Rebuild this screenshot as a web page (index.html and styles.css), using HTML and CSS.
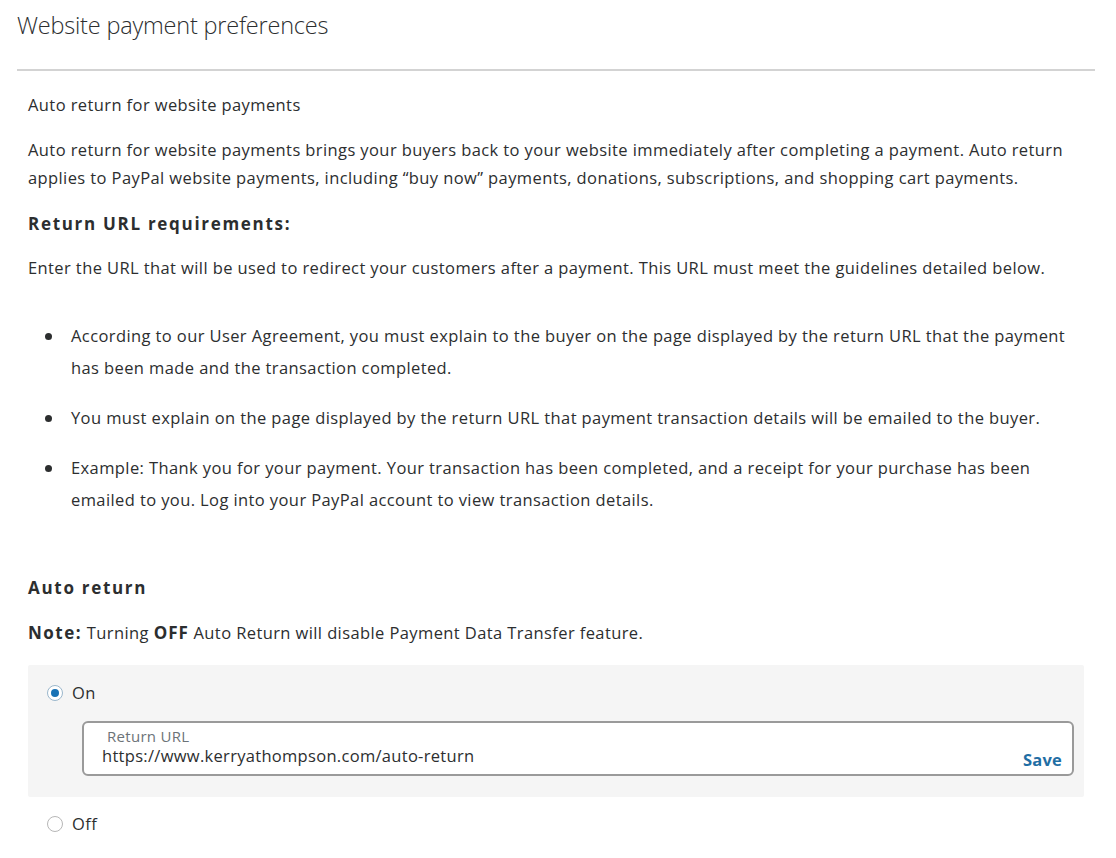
FILE: index.html
```html
<!DOCTYPE html>
<html>
<head>
<meta charset="utf-8">
<link rel="stylesheet" href="styles.css">
</head>
<body>
<div class="page">
  <h1 class="title">Website payment preferences</h1>
  <div class="rule"></div>
  <div class="content">
    <h2 class="subtitle">Auto return for website payments</h2>
    <p class="intro">Auto return for website payments brings your buyers back to your website immediately after completing a payment. Auto return applies to PayPal website payments, including “buy now” payments, donations, subscriptions, and shopping cart payments.</p>
    <h3 class="heading">Return URL requirements:</h3>
    <p class="lead">Enter the URL that will be used to redirect your customers after a payment. This URL must meet the guidelines detailed below.</p>
    <ul class="reqs">
      <li>According to our User Agreement, you must explain to the buyer on the page displayed by the return URL that the payment has been made and the transaction completed.</li>
      <li>You must explain on the page displayed by the return URL that payment transaction details will be emailed to the buyer.</li>
      <li>Example: Thank you for your payment. Your transaction has been completed, and a receipt for your purchase has been emailed to you. Log into your PayPal account to view transaction details.</li>
    </ul>
    <h3 class="heading heading-auto">Auto return</h3>
    <p class="note"><b class="strong">Note:</b> Turning <b class="strong2">OFF</b> Auto Return will disable Payment Data Transfer feature.</p>
    <div class="panel">
      <label class="radio-row">
        <span class="radio radio-on"></span>
        <span class="radio-label">On</span>
      </label>
      <div class="field">
        <div class="field-text">
          <span class="field-label">Return URL</span>
          <span class="field-value">https://www.kerryathompson.com/auto-return</span>
        </div>
        <span class="save">Save</span>
      </div>
    </div>
    <label class="radio-row radio-off-row">
      <span class="radio"></span>
      <span class="radio-label">Off</span>
    </label>
  </div>
</div>
</body>
</html>
```

FILE: styles.css
```css
html, body {
  margin: 0;
  padding: 0;
  background: #ffffff;
}
body {
  font-family: "Open Sans", "Noto Sans", sans-serif;
  color: #2c2e2f;
}
.page {
  padding: 0 21px 0 17px;
}
.title {
  margin: 0;
  padding-top: 8px;
  font-size: 23.5px;
  line-height: 34px;
  font-weight: 300;
  color: #2c2e2f;
  letter-spacing: -0.2px;
}
.rule {
  margin-top: 27px;
  height: 2px;
  background: #d3d3d3;
}
.content {
  padding-left: 11px;
  font-size: 16.5px;
  letter-spacing: 0.4px;
}
.subtitle {
  margin: 22px 0 0;
  font-size: 16.5px;
  line-height: 24px;
  font-weight: 400;
}
.intro {
  margin: 19px 0 0;
  font-size: 16.5px;
  line-height: 28px;
}
.heading {
  margin: 20px 0 0;
  font-size: 17px;
  line-height: 24px;
  font-weight: 700;
  letter-spacing: 1.7px;
}
.lead {
  margin: 20px 0 0;
  font-size: 16.5px;
  line-height: 24px;
}
.reqs {
  margin: 40px 0 0;
  padding: 0 0 0 43px;
  list-style: none;
}
.reqs li {
  position: relative;
  font-size: 16.5px;
  line-height: 32px;
  margin-bottom: 18px;
}
.reqs li::before {
  content: "";
  position: absolute;
  left: -26px;
  top: 13px;
  width: 7px;
  height: 7px;
  border-radius: 50%;
  background: #2c2e2f;
}
.heading-auto {
  margin-top: 60px;
}
.note {
  margin: 21px 0 0;
  font-size: 16.5px;
  line-height: 24px;
}
.strong {
  letter-spacing: 1.5px;
  font-size: 17px;
}
.strong2 {
  letter-spacing: 1px;
  font-size: 17px;
}
.panel {
  margin-top: 20px;
  margin-right: 11px;
  background: #f5f5f5;
  padding: 16px 10px 21px 19px;
  border-radius: 2px;
}
.radio-row {
  display: flex;
  align-items: center;
  gap: 9px;
  height: 24px;
}
.radio {
  width: 16px;
  height: 16px;
  border-radius: 50%;
  border: 1px solid #b7b7b7;
  background: #fff;
  box-sizing: border-box;
  position: relative;
  flex: none;
}
.radio-on {
  border: 1.5px solid #9bb7cc;
}
.radio-on::after {
  content: "";
  position: absolute;
  left: 2.5px;
  top: 2.5px;
  width: 8px;
  height: 8px;
  border-radius: 50%;
  background: #1872b5;
}
.radio-label {
  font-size: 16.5px;
  line-height: 24px;
}
.field {
  margin: 16px 0 0 35px;
  height: 55px;
  box-sizing: border-box;
  border: 2px solid #9a9a9a;
  border-radius: 6px;
  background: #fff;
  display: flex;
  align-items: flex-end;
  justify-content: space-between;
  padding: 0 10px 3px 18px;
  letter-spacing: 0.3px;
}
.field-text {
  display: flex;
  flex-direction: column;
  align-self: flex-start;
  padding-top: 4px;
}
.field-label {
  font-size: 15px;
  line-height: 18px;
  color: #6c7378;
  padding-left: 5px;
}
.field-value {
  font-size: 16.5px;
  line-height: 22px;
  color: #2c2e2f;
}
.save {
  font-size: 16.5px;
  font-weight: 700;
  color: #1f6ea4;
  line-height: 22px;
  letter-spacing: 0.2px;
}
.radio-off-row {
  margin-top: 15px;
  padding-left: 19px;
}
```
